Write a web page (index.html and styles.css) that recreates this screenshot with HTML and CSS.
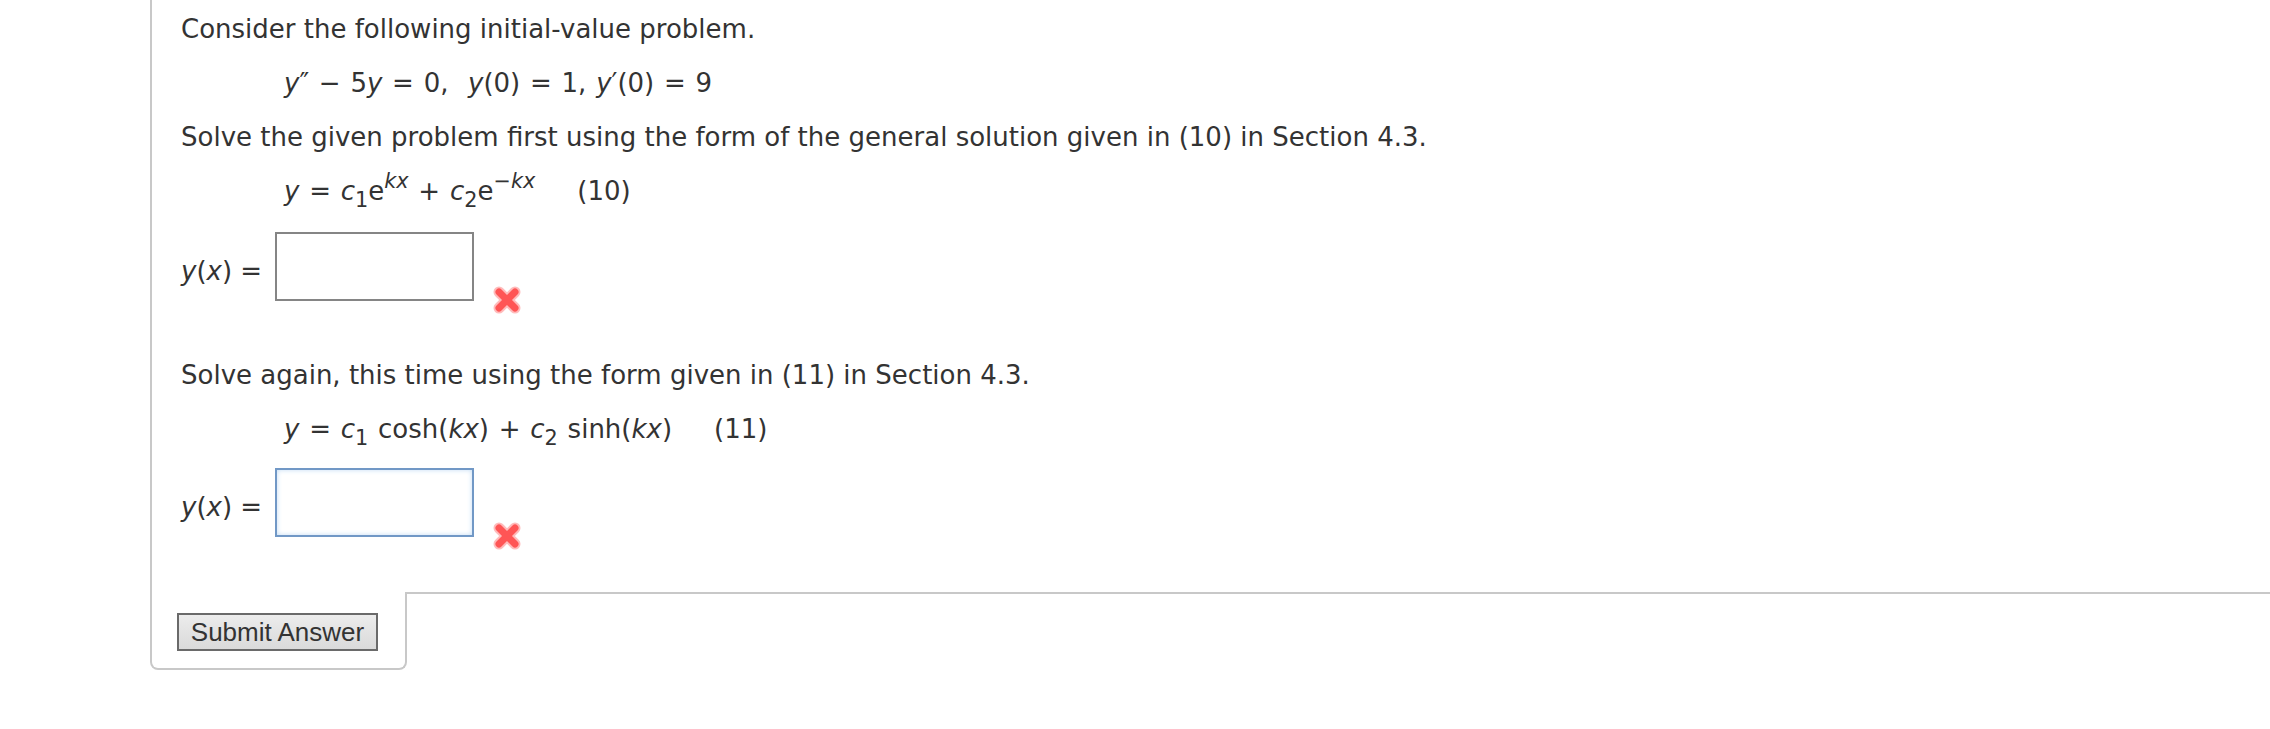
FILE: index.html
```html
<!DOCTYPE html>
<html lang="en">
  <head>
    <meta charset="UTF-8" />
    <meta name="viewport" content="width=device-width, initial-scale=1.0" />
    <title>Initial-Value Problem</title>
    <link rel="stylesheet" href="styles.css">
  </head>
  <body>
    <div class="question">
      <p class="line">Consider the following initial-value problem.</p>
      <p class="line eq"><i>y</i>″ − 5<i>y</i> = 0,&nbsp; <i>y</i>(0) = 1, <i>y</i>′(0) = 9</p>

      <p class="line">Solve the given problem first using the form of the general solution given in (10) in Section 4.3.</p>
      <p class="line eq"><i>y</i> = <i>c</i><sub>1</sub>e<sup><i>kx</i></sup> + <i>c</i><sub>2</sub>e<sup>−<i>kx</i></sup><span class="tag">(10)</span></p>

      <div class="answer first">
        <span class="label"><i>y</i>(<i>x</i>) =</span>
        <input class="field" type="text" />
        <svg class="wrong" width="28" height="28" viewBox="0 0 28 28">
          <path d="M6 6 L22 22 M22 6 L6 22" stroke="#fbb" stroke-width="11" stroke-linecap="round" />
          <path d="M6 6 L22 22 M22 6 L6 22" stroke="#f55" stroke-width="7" stroke-linecap="round" />
        </svg>
      </div>

      <p class="line">Solve again, this time using the form given in (11) in Section 4.3.</p>
      <p class="line eq"><i>y</i> = <i>c</i><sub>1</sub> cosh(<i>kx</i>) + <i>c</i><sub>2</sub> sinh(<i>kx</i>)<span class="tag">(11)</span></p>

      <div class="answer second">
        <span class="label"><i>y</i>(<i>x</i>) =</span>
        <input class="field active" type="text" />
        <svg class="wrong" width="28" height="28" viewBox="0 0 28 28">
          <path d="M6 6 L22 22 M22 6 L6 22" stroke="#fbb" stroke-width="11" stroke-linecap="round" />
          <path d="M6 6 L22 22 M22 6 L6 22" stroke="#f55" stroke-width="7" stroke-linecap="round" />
        </svg>
      </div>
    </div>

    <div class="footer">
      <div class="tab">
        <button class="submit">Submit Answer</button>
      </div>
      <div class="filler"></div>
    </div>
  </body>
</html>
```

FILE: styles.css
```css
* {
  margin: 0;
  padding: 0;
  box-sizing: border-box;
}

body {
  font-family: "DejaVu Sans", Verdana, sans-serif;
  font-size: 26px;
  color: #333;
  background: #fff;
}

.question {
  margin-left: 150px;
  border-left: 2px solid #c8c8c8;
  padding: 2px 0 42px 29px;
}

.line {
  line-height: 54px;
  white-space: nowrap;
}

.eq {
  padding-left: 103px;
  word-spacing: 1.5px;
}

.eq sub,
.eq sup {
  font-size: 0.8em;
  line-height: 0;
}

.eq sub {
  vertical-align: -0.35em;
}

.eq sup {
  vertical-align: 0.6em;
}

.tag {
  margin-left: 42px;
}

.answer {
  display: flex;
  align-items: flex-start;
}

.answer.first {
  margin-top: 14px;
  margin-bottom: 34px;
}

.answer.second {
  margin-top: 12px;
}

.label {
  line-height: 34px;
  margin-top: 22px;
  margin-right: 13px;
}

.field {
  width: 199px;
  height: 69px;
  border: 2px solid #858585;
  background: #fff;
  outline: none;
}

.field.active {
  border-color: #7198c6;
  box-shadow: inset 0 0 5px #c2dcf5;
}

.wrong {
  margin-top: 54px;
  margin-left: 19px;
}

.footer {
  display: flex;
  margin-left: 150px;
}

.tab {
  width: 257px;
  border: 2px solid #c8c8c8;
  border-top: none;
  border-radius: 0 0 8px 8px;
  padding: 21px 0 17px 25px;
}

.filler {
  flex: 1;
  border-top: 2px solid #c8c8c8;
  margin-left: -2px;
}

.submit {
  width: 201px;
  height: 38px;
  font-family: "Liberation Sans", Arial, sans-serif;
  font-size: 26px;
  color: #333;
  background: linear-gradient(#ececec, #dadada);
  border: 2px solid #6a6a6a;
  cursor: pointer;
}
```
